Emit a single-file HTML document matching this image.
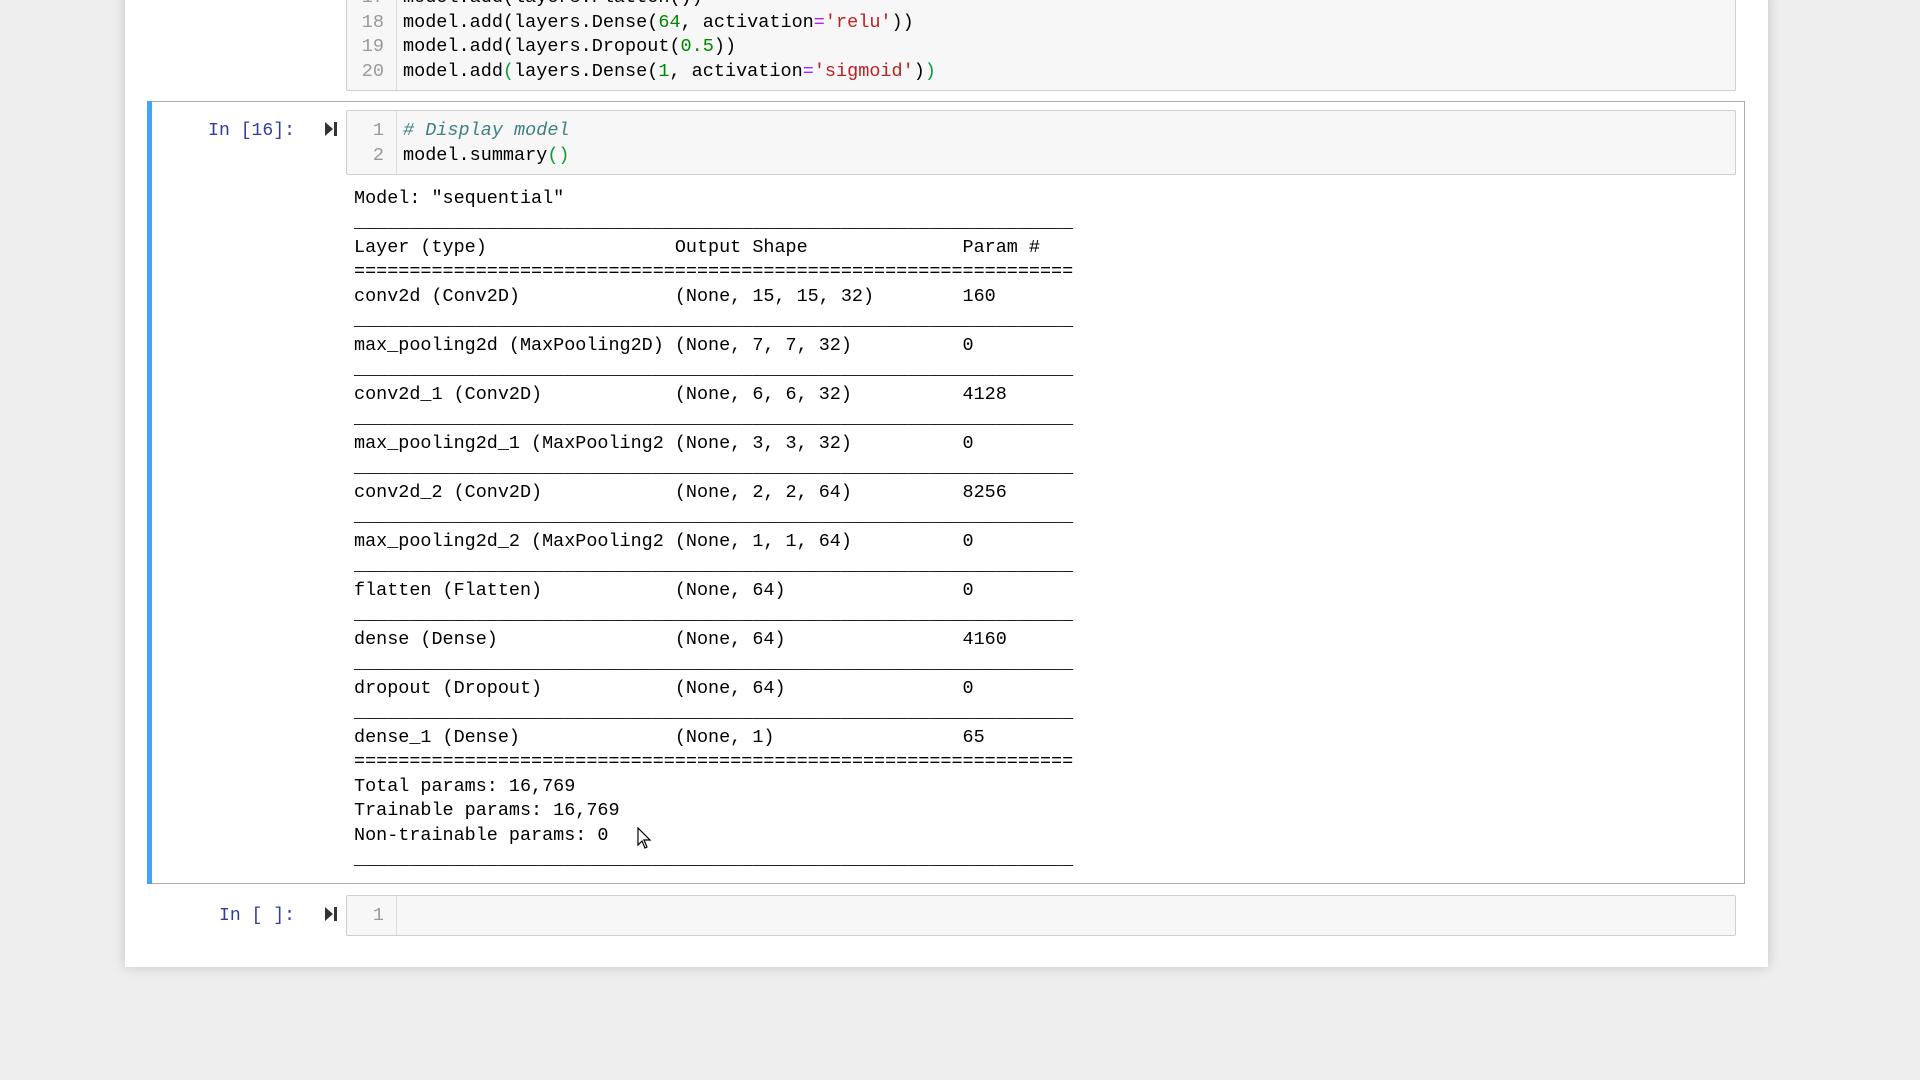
<!DOCTYPE html>
<html><head><meta charset="utf-8"><style>
*{margin:0;padding:0;box-sizing:border-box}
body{width:1920px;height:1080px;background:#eeeeee;position:relative;overflow:hidden;font-family:"Liberation Mono",monospace}
.page{position:absolute;left:125px;top:-10px;width:1643px;height:977px;background:#fff;box-shadow:0 0 12px rgba(0,0,0,.18)}
.box{position:absolute;left:346px;width:1390px;background:#f7f7f7;border:1px solid #cfcfcf;border-radius:2px;overflow:hidden}
.gut{position:absolute;left:0;top:0;bottom:0;width:50px;border-right:1px solid #dddddd}
.ln{position:absolute;left:0;width:37px;text-align:right;color:#999;font-size:18.5px;line-height:24.5px;white-space:pre}
.code{position:absolute;left:56px;font-size:18.5px;line-height:24.5px;white-space:pre;color:#000}
.n{color:#008800}.s{color:#BA2121}.o{color:#AA22FF}.g{color:#0b9b3a}
.c{color:#408080;font-style:italic}
.prompt{position:absolute;width:295px;left:0;text-align:right;color:#303F9F;font-size:18.1px;line-height:24px;white-space:pre}
.run{position:absolute;left:325px}
.cell{position:absolute;left:147px;top:101px;width:1598px;height:783px;border:1px solid #ababab;border-left:none}
.bar{position:absolute;left:147px;top:101px;width:5px;height:783px;background:#42a5f5}
pre.out{position:absolute;left:354px;top:187px;font-family:"Liberation Mono",monospace;font-size:18.45px;line-height:24.49px;color:#000}
</style></head><body>
<div class="page"></div>
<div class="box" style="top:-30px;height:121px">
 <div class="gut"></div>
 <div class="ln" style="top:15px">17
18
19
20</div>
 <div class="code" style="top:15px">model.add(layers.Flatten())
model.add(layers.Dense(<span class="n">64</span>, activation<span class="o">=</span><span class="s">'relu'</span>))
model.add(layers.Dropout(<span class="n">0.5</span>))
model.add<span class="g">(</span>layers.Dense(<span class="n">1</span>, activation<span class="o">=</span><span class="s">'sigmoid'</span>)<span class="g">)</span></div>
</div>
<div class="cell"></div>
<div class="bar"></div>
<div class="prompt" style="top:119px">In [16]:</div>
<svg class="run" style="top:121px" width="13" height="16" viewBox="0 0 13 16"><path d="M0 1 L8 8 L0 15Z" fill="#333"/><rect x="9" y="1" width="3" height="14" fill="#333"/></svg>
<div class="box" style="top:110px;height:65px">
 <div class="gut"></div>
 <div class="ln" style="top:8px">1
2</div>
 <div class="code" style="top:8px"><span class="c"># Display model</span>
model.summary<span class="g">()</span></div>
</div>
<pre class="out">Model: "sequential"
_________________________________________________________________
Layer (type)                 Output Shape              Param #   
=================================================================
conv2d (Conv2D)              (None, 15, 15, 32)        160       
_________________________________________________________________
max_pooling2d (MaxPooling2D) (None, 7, 7, 32)          0         
_________________________________________________________________
conv2d_1 (Conv2D)            (None, 6, 6, 32)          4128      
_________________________________________________________________
max_pooling2d_1 (MaxPooling2 (None, 3, 3, 32)          0         
_________________________________________________________________
conv2d_2 (Conv2D)            (None, 2, 2, 64)          8256      
_________________________________________________________________
max_pooling2d_2 (MaxPooling2 (None, 1, 1, 64)          0         
_________________________________________________________________
flatten (Flatten)            (None, 64)                0         
_________________________________________________________________
dense (Dense)                (None, 64)                4160      
_________________________________________________________________
dropout (Dropout)            (None, 64)                0         
_________________________________________________________________
dense_1 (Dense)              (None, 1)                 65        
=================================================================
Total params: 16,769
Trainable params: 16,769
Non-trainable params: 0
_________________________________________________________________</pre>
<svg style="position:absolute;left:637px;top:827px" width="16" height="24" viewBox="0 0 16 24"><path d="M1 1 L1 18 L5 14 L8 21 L10 20 L7 13 L13 13 Z" fill="#fff" stroke="#000" stroke-width="1.2"/></svg>
<div class="prompt" style="top:904px">In [ ]:</div>
<svg class="run" style="top:906px" width="13" height="16" viewBox="0 0 13 16"><path d="M0 1 L8 8 L0 15Z" fill="#333"/><rect x="9" y="1" width="3" height="14" fill="#333"/></svg>
<div class="box" style="top:895px;height:41px">
 <div class="gut"></div>
 <div class="ln" style="top:8px">1</div>
</div>
</body></html>
